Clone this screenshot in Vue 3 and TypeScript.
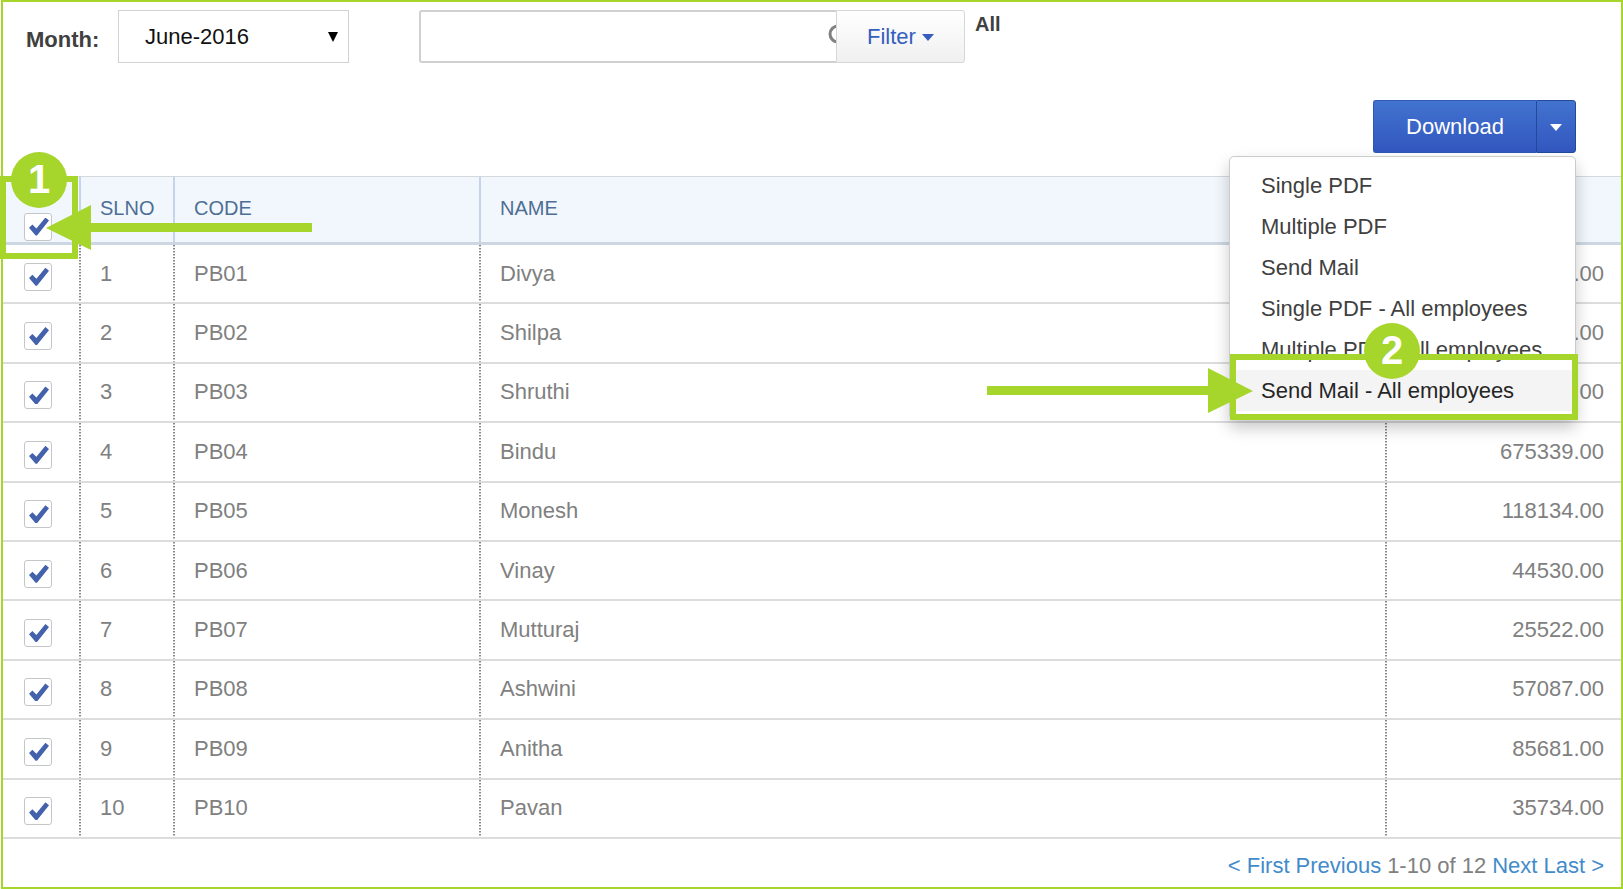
<script setup lang="ts">
import { ref, computed } from 'vue'

interface Employee {
  code: string
  name: string
  amount: string
  selected: boolean
}

const month = ref('June-2016')
const query = ref('')

const employees = ref<Employee[]>(
  [
    ['PB01', 'Divya', '52340.00'],
    ['PB02', 'Shilpa', '48120.00'],
    ['PB03', 'Shruthi', '61275.00'],
    ['PB04', 'Bindu', '675339.00'],
    ['PB05', 'Monesh', '118134.00'],
    ['PB06', 'Vinay', '44530.00'],
    ['PB07', 'Mutturaj', '25522.00'],
    ['PB08', 'Ashwini', '57087.00'],
    ['PB09', 'Anitha', '85681.00'],
    ['PB10', 'Pavan', '35734.00'],
  ].map(([code, name, amount]) => ({ code, name, amount, selected: true })),
)

const allSelected = computed({
  get: () => employees.value.every((e) => e.selected),
  set: (value: boolean) => employees.value.forEach((e) => (e.selected = value)),
})

const downloadOptions = [
  'Single PDF',
  'Multiple PDF',
  'Send Mail',
  'Single PDF - All employees',
  'Multiple PDF - All employees',
  'Send Mail - All employees',
]
const activeOption = 5
</script>

<template>
  <main class="page">
    <header class="toolbar">
      <label class="month-label" for="month">Month:</label>
      <div class="month">
        <select id="month" v-model="month">
          <option>June-2016</option>
        </select>
        <svg class="month-caret" viewBox="0 0 10 10" aria-hidden="true"><path d="M0 0H10L5 10Z" /></svg>
      </div>
      <div class="search">
        <div class="search-box">
          <input v-model="query" type="text" aria-label="Search employees" />
          <svg class="search-icon" viewBox="0 0 24 24" aria-hidden="true">
            <circle cx="10" cy="10" r="8" />
            <path d="M16 16L22 22" />
          </svg>
        </div>
        <button class="filter" type="button">
          Filter
          <svg class="caret" viewBox="0 0 12 7" aria-hidden="true"><path d="M0 0H12L6 7Z" /></svg>
        </button>
      </div>
      <strong class="scope">All</strong>
    </header>

    <div class="actions">
      <div class="download">
        <button class="download-main" type="button">Download</button>
        <button class="download-toggle" type="button" aria-label="Download options">
          <svg class="caret" viewBox="0 0 12 7" aria-hidden="true"><path d="M0 0H12L6 7Z" /></svg>
        </button>
        <div class="menu">
          <button
            v-for="(option, i) in downloadOptions"
            :key="option"
            type="button"
            class="menu-item"
            :class="{ active: i === activeOption }"
          >
            {{ option }}
          </button>
          <div class="callout callout-mail"><span class="badge">2</span></div>
          <svg class="arrow arrow-right" viewBox="0 0 266 45" aria-hidden="true">
            <path d="M0 18H221V0L266 23L221 45V27H0Z" />
          </svg>
        </div>
      </div>
    </div>

    <div class="grid">
      <table>
        <colgroup>
          <col class="col-check" />
          <col class="col-no" />
          <col class="col-code" />
          <col />
          <col class="col-amount" />
        </colgroup>
        <thead>
          <tr>
            <th class="check check-all">
              <input v-model="allSelected" type="checkbox" aria-label="Select all employees" />
            </th>
            <th>SLNO</th>
            <th>CODE</th>
            <th class="wide">NAME</th>
            <th></th>
          </tr>
        </thead>
        <tbody>
          <tr v-for="(employee, i) in employees" :key="employee.code">
            <td class="check">
              <input v-model="employee.selected" type="checkbox" :aria-label="`Select ${employee.name}`" />
            </td>
            <td>{{ i + 1 }}</td>
            <td>{{ employee.code }}</td>
            <td>{{ employee.name }}</td>
            <td class="amount">{{ employee.amount }}</td>
          </tr>
        </tbody>
      </table>
      <div class="callout callout-select"><span class="badge">1</span></div>
      <svg class="arrow arrow-left" viewBox="0 0 266 45" aria-hidden="true">
        <path d="M266 18H45V0L0 23L45 45V27H266Z" />
      </svg>
    </div>

    <nav class="pager" aria-label="Pagination">
      <a href="#first">&lt; First</a>
      <a href="#previous">Previous</a>
      <span>1-10 of 12</span>
      <a href="#next">Next</a>
      <a href="#last">Last &gt;</a>
    </nav>
  </main>
</template>

<style>
body {
  margin: 0;
  background: #fff;
}
</style>

<style scoped>
.page {
  box-sizing: border-box;
  min-height: 100vh;
  margin-left: 1px;
  border: 2px solid #a6d52c;
  font: 22px/26px "Liberation Sans", Arial, sans-serif;
  color: #808080;
  background: #fff;
}

.page *,
.page *::before {
  box-sizing: border-box;
}

button,
input,
select {
  margin: 0;
  font: inherit;
}

.toolbar {
  display: flex;
  align-items: flex-start;
  padding: 8px 16px 0 23px;
}

.month-label {
  width: 92px;
  padding-top: 17px;
  font-weight: bold;
  color: #404040;
}

.month {
  position: relative;
  width: 231px;
  margin-right: 70px;
}

.month select {
  display: block;
  appearance: none;
  width: 100%;
  height: 53px;
  padding: 0 24px 0 26px;
  border: 1px solid #cfd3d3;
  border-radius: 0;
  color: #111;
  background: #fff;
}

.month-caret {
  position: absolute;
  top: 22px;
  right: 11px;
  width: 10px;
  height: 10px;
  pointer-events: none;
}

.search {
  display: flex;
  margin-right: 10px;
}

.search-box {
  position: relative;
  width: 417px;
  overflow: hidden;
}

.search-box input {
  display: block;
  width: 100%;
  height: 53px;
  padding: 0 16px;
  border: 2px solid #cfd1d1;
  border-right: 0;
  border-radius: 3px 0 0 3px;
  background: #fff;
}

.search-icon {
  position: absolute;
  top: 14px;
  right: -16px;
  width: 24px;
  height: 24px;
  fill: none;
  stroke: #808080;
  stroke-width: 3;
}

.filter {
  width: 129px;
  height: 53px;
  padding: 0;
  border: 1px solid #d4d7d7;
  border-radius: 0 3px 3px 0;
  color: #365ebf;
  background: linear-gradient(#fff, #f0f0f0);
}

.caret {
  width: 12px;
  height: 7px;
  vertical-align: middle;
  fill: currentColor;
}

.scope {
  padding-top: 1px;
  font-size: 20px;
  color: #404040;
}

.actions {
  display: flex;
  justify-content: flex-end;
  padding: 37px 45px 23px;
}

.download {
  position: relative;
  display: flex;
  z-index: 2;
}

.download-main,
.download-toggle {
  height: 53px;
  padding: 0;
  border: 1px solid #2f58b4;
  color: #fff;
  background: linear-gradient(#4273cf, #3257bf);
}

.download-main {
  width: 163px;
  border-right: 0;
  border-radius: 3px 0 0 3px;
}

.download-toggle {
  width: 40px;
  border-color: #24489b;
  border-radius: 0 3px 3px 0;
}

.menu {
  position: absolute;
  top: 56px;
  right: 0;
  width: 347px;
  padding: 8px 0;
  border: 1px solid #ccc;
  border-radius: 5px;
  background: #fff;
  box-shadow: 0 8px 16px rgba(0, 0, 0, 0.22);
}

.menu-item {
  display: block;
  width: 100%;
  height: 41px;
  padding: 0 0 0 31px;
  border: 0;
  text-align: left;
  color: #404040;
  background: none;
}

.menu-item.active {
  color: #262626;
  background: #f4f4f4;
}

.callout {
  position: absolute;
  display: flex;
  justify-content: center;
  border: 6px solid #a6d52c;
  pointer-events: none;
}

.callout-select {
  top: 0;
  left: -3px;
  width: 78px;
  height: 83px;
}

.callout-mail {
  right: -3px;
  bottom: -1px;
  width: 348px;
  height: 66px;
}

.badge {
  flex: none;
  width: 56px;
  height: 56px;
  margin-top: -30px;
  border-radius: 50%;
  font-size: 40px;
  font-weight: bold;
  line-height: 54px;
  text-align: center;
  color: #fff;
  background: #a6d52c;
}

.callout-mail .badge {
  margin-right: 24px;
  margin-top: -37px;
}

.arrow {
  position: absolute;
  width: 266px;
  height: 45px;
  fill: #a6d52c;
  pointer-events: none;
}

.arrow-right {
  right: 322px;
  bottom: 6px;
}

.arrow-left {
  top: 29px;
  left: 43px;
}

.grid {
  position: relative;
}

table {
  width: 100%;
  height: 663px;
  border-collapse: separate;
  border-spacing: 0;
  table-layout: fixed;
}

.col-check {
  width: 78px;
}

.col-no {
  width: 94px;
}

.col-code {
  width: 306px;
}

.col-amount {
  width: 234px;
}

th {
  height: 69px;
  padding: 0 0 4px 19px;
  border-top: 1px solid #d5d9dc;
  border-bottom: 3px solid #ccd7e2;
  border-right: 2px solid #c5d4e6;
  font-size: 20px;
  font-weight: normal;
  text-align: left;
  color: #4e6f94;
  background: #f2f7fe;
}

td {
  padding: 0 0 0 19px;
  border-bottom: 2px solid #dcdcdc;
  background: repeating-linear-gradient(#888 0 1px, #c8c8c8 1px 2px, #fff 2px 3px) right / 2px 100% no-repeat;
}

th:last-child {
  border-right: 0;
}

td:last-child {
  background: none;
}

.check {
  padding: 6px 0 0 21px;
}

.check-all {
  padding-top: 34px;
  padding-bottom: 0;
}

.check input {
  display: block;
  appearance: none;
  width: 28px;
  height: 28px;
  border: 1px solid #c4c6c8;
  border-radius: 3px;
  background: #fff;
}

.check input:checked::before {
  content: "";
  display: block;
  width: 20px;
  height: 18px;
  margin: 4px 0 0 4px;
  background: #4462ac;
  clip-path: polygon(0 57%, 17% 39%, 37% 61%, 82% 0, 100% 17%, 40% 100%, 33% 100%);
}

.amount {
  padding-right: 17px;
  text-align: right;
}

.pager {
  display: flex;
  justify-content: flex-end;
  gap: 6px;
  padding: 14px 17px 8px;
}

.pager a {
  color: #428bca;
  text-decoration: none;
}
</style>
